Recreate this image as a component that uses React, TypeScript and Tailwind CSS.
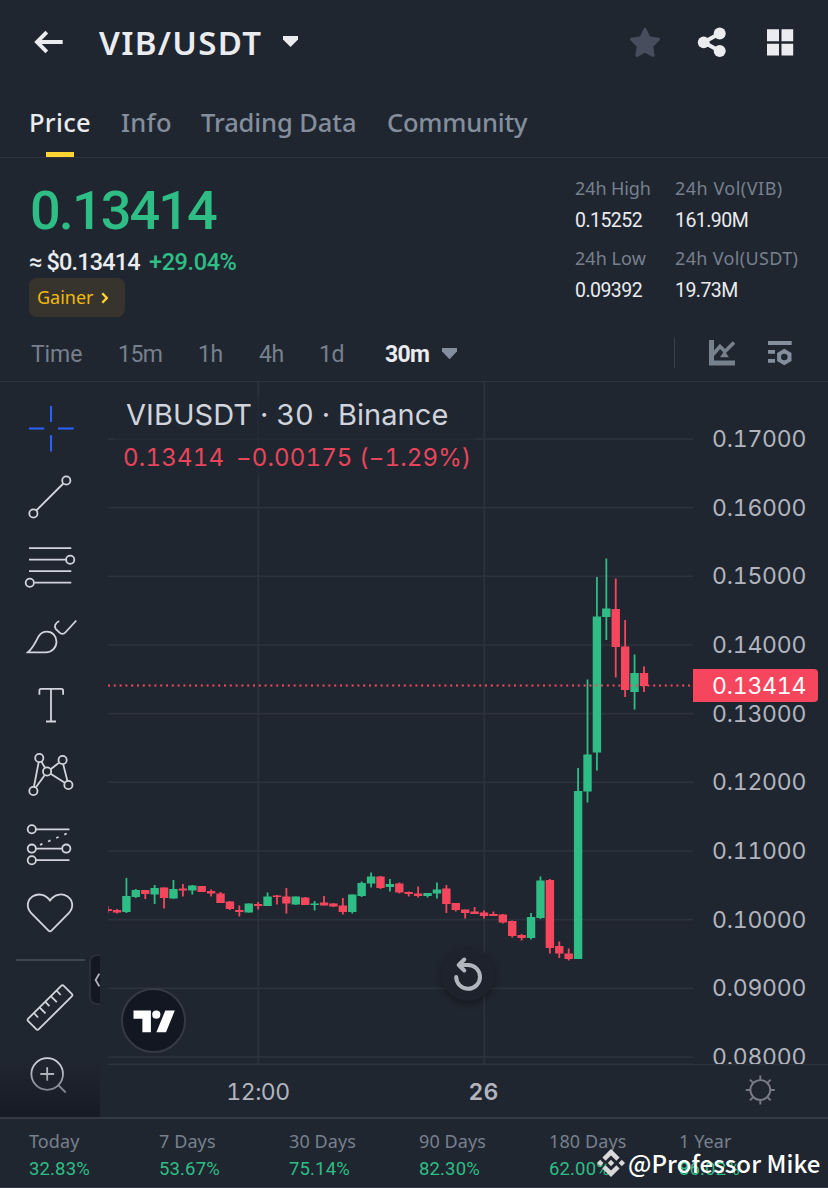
import type { ReactNode } from "react";

type Candle = [up: 0 | 1, high: number, top: number, bottom: number, low: number];

// y positions on the chart canvas, one entry per 30 minute bar
const candles: Candle[] = [
  [0, 906, 909, 911, 913],
  [0, 909, 910, 912.5, 913.5],
  [1, 878, 896, 912, 913],
  [1, 889, 890, 897, 898],
  [0, 890, 890, 894, 899],
  [1, 885, 888, 894.5, 904],
  [0, 887.5, 887.5, 898, 908.5],
  [1, 880, 889, 898.5, 898.5],
  [0, 884, 888.5, 890.5, 896.5],
  [1, 885, 885.5, 890.5, 894.5],
  [0, 886, 886, 892, 892],
  [0, 889.5, 891, 893.5, 896.5],
  [0, 892, 893.5, 903, 903],
  [0, 901, 901.5, 909, 910],
  [0, 905.5, 910, 912, 916.5],
  [1, 903.5, 903.5, 912.5, 912.5],
  [0, 902, 904, 906, 909.5],
  [1, 892.5, 896.5, 906, 906],
  [0, 895, 895.5, 897, 904.5],
  [0, 888, 896.5, 903.5, 913.5],
  [1, 896.5, 896.5, 904.5, 905],
  [0, 897, 897.5, 905, 905],
  [1, 901, 903.5, 905, 910.5],
  [0, 896, 902.5, 905.5, 905.5],
  [0, 903, 903.5, 906.5, 907],
  [0, 898, 905.5, 912, 914.5],
  [1, 894.5, 894.5, 912, 913.5],
  [1, 881.5, 883, 896, 897],
  [1, 872.5, 876.5, 883.5, 887.5],
  [0, 876, 876.5, 888, 889],
  [1, 879, 884, 887, 891.5],
  [0, 882.5, 883.5, 892.5, 893.5],
  [0, 891.5, 892, 894, 896.5],
  [0, 886.5, 893.5, 896, 897.5],
  [1, 893, 893, 896, 897.5],
  [1, 882.5, 889.5, 893.5, 898.5],
  [0, 885, 888.5, 904, 913],
  [0, 903, 903, 910, 911.5],
  [0, 909.5, 909.5, 913, 918.5],
  [0, 907, 911.5, 914, 914],
  [0, 910.5, 912.5, 916, 918.5],
  [0, 911.5, 914, 916, 916],
  [0, 914, 914.5, 922.5, 923.5],
  [0, 920.5, 921, 936, 937.5],
  [0, 934, 935, 938, 940.5],
  [1, 913, 917, 938, 939.5],
  [1, 876.5, 880.5, 918, 919],
  [0, 879, 880, 948, 953.5],
  [0, 941.5, 946, 953.5, 958],
  [0, 948.5, 953.5, 959, 960.5],
  [1, 768, 791, 959, 959],
  [1, 679.5, 754.5, 791.5, 802.5],
  [1, 577, 616.5, 752.5, 770.5],
  [1, 558.5, 608.5, 617, 640],
  [0, 578.5, 609, 647, 677.5],
  [0, 620, 646.5, 690, 697],
  [1, 654.5, 673, 692, 709.5],
  [0, 666.5, 673, 686, 692],
];

const gridRows = [439, 507.7, 576.3, 645, 713.6, 782.3, 851, 919.6, 988.3, 1057];
const prices = [
  "0.17000",
  "0.16000",
  "0.15000",
  "0.14000",
  "0.13000",
  "0.12000",
  "0.11000",
  "0.10000",
  "0.09000",
  "0.08000",
];

const periods = [
  { label: "Today", value: "32.83%" },
  { label: "7 Days", value: "53.67%" },
  { label: "30 Days", value: "75.14%" },
  { label: "90 Days", value: "82.30%" },
  { label: "180 Days", value: "62.00%" },
  { label: "1 Year", value: "86.02%" },
];

function Tool({ y, h = 69, children }: { y: number; h?: number; children: ReactNode }) {
  return (
    <svg
      viewBox={`0 ${y} 100 ${h}`}
      width={100}
      height={h}
      className="block shrink-0"
      fill="none"
      stroke="#d1d4dc"
      strokeWidth={1.8}
    >
      {children}
    </svg>
  );
}

function Header() {
  return (
    <header className="flex h-[86px] items-center">
      <svg viewBox="34 29 30 26" width={30} height={26} className="mb-0.5 ml-[34px]" fill="none" stroke="#eaecef" strokeWidth={3.9}>
        <path d="M62.7 42H37M46.8 32.2L37 42l9.8 9.8" />
      </svg>
      <h1 className="ml-[35px] w-[184px] font-['Noto_Sans'] text-[33px] font-semibold tracking-[1.35px] text-[#eaecef]">
        VIB/USDT
      </h1>
      <svg viewBox="283 35 15 13" width={15} height={13} className="mb-[3px]" fill="#eaecef">
        <path d="M283 36h15v3.4L290.5 47 283 39.4z" />
      </svg>
      <svg viewBox="630 26 30 34" width={30} height={34} className="ml-[332px]" fill="#474d5c" stroke="#474d5c" strokeWidth={3} strokeLinejoin="round">
        <path d="M645 29.3l4 8.5 9.5 1.5-6.8 6.8 1.4 9.3-8.1-4.2-8.1 4.2 1.4-9.3-6.8-6.8 9.5-1.5z" />
      </svg>
      <svg viewBox="697 26 30 34" width={30} height={34} className="ml-[37px]" fill="#eaecef">
        <path d="M719.7 33.5L703.7 42.3l16 8.7" fill="none" stroke="#eaecef" strokeWidth={4} />
        <circle cx={719.7} cy={33.6} r={6} />
        <circle cx={703.7} cy={42.3} r={5.9} />
        <circle cx={719.7} cy={51.1} r={6} />
      </svg>
      <svg viewBox="766 26 28 34" width={28} height={34} className="ml-[39px]" fill="#eaecef">
        <path d="M767 29.2h12v12h-12zM781.5 29.2h11.7v12h-11.7zM767 43.8h12v11.7h-12zM781.5 43.8h11.7v11.7h-11.7z" />
      </svg>
    </header>
  );
}

function Tabs() {
  return (
    <nav className="flex h-[72px] border-b border-[#2d333d] pt-5 pl-[29px] font-['Noto_Sans'] text-[25.5px] leading-8 font-medium text-[#848e9c]">
      <div className="relative w-[92px] tracking-[0.3px] text-[#eaecef]">
        Price
        <span className="absolute top-[46px] left-[17px] h-[5px] w-[28px] bg-[#fcd535]" />
      </div>
      <div className="w-[80px] tracking-[0.3px]">Info</div>
      <div className="w-[186px] tracking-[-0.1px]">Trading Data</div>
      <div className="tracking-[-0.2px]">Community</div>
    </nav>
  );
}

function Stat({ label, value, labelClass }: { label: string; value: string; labelClass: string }) {
  return (
    <div className="whitespace-nowrap">
      <div className={`font-['Noto_Sans'] text-[18px] leading-[29px] text-[#77808d] ${labelClass}`}>{label}</div>
      <div className="pt-0.5 font-['Roboto'] text-[19.5px] leading-[32px] tracking-[-0.55px] text-[#eaecef]">{value}</div>
    </div>
  );
}

function Ticker() {
  return (
    <section className="flex h-[167px]">
      <div className="w-[546px] pt-[25px] pl-[29px]">
        <div className="pl-px font-['Roboto'] text-[54px] leading-[56px] font-medium tracking-[-1.9px] text-[#2ebd85]">0.13414</div>
        <div className="flex pt-[7px] font-['Roboto'] text-[23.5px] leading-8 font-medium">
          <span className="w-[120px] tracking-[-0.85px] text-[#eaecef]">≈ $0.13414</span>
          <span className="tracking-[-0.4px] text-[#2ebd85]">+29.04%</span>
        </div>
        <div className="flex h-[39px] w-24 items-center rounded-lg bg-[#37342d] pl-2 font-['Noto_Sans'] text-[18px] text-[#f0b90b]">
          <span className="w-16">Gainer</span>
          <svg viewBox="0 0 8 12" width={8} height={12} fill="none" stroke="#fcd535" strokeWidth={2.4}>
            <path d="M1.3 1.2L5.8 6l-4.5 4.8" />
          </svg>
        </div>
      </div>
      <div className="grid grid-cols-[100px_auto] content-start gap-y-[7px] pt-4 pl-[29px]">
        <Stat label="24h High" value="0.15252" labelClass="tracking-[-0.1px]" />
        <Stat label="24h Vol(VIB)" value="161.90M" labelClass="tracking-[0.5px]" />
        <Stat label="24h Low" value="0.09392" labelClass="tracking-[0.05px]" />
        <Stat label="24h Vol(USDT)" value="19.73M" labelClass="tracking-[0.35px]" />
      </div>
    </section>
  );
}

function Intervals() {
  return (
    <div className="flex h-[57px] items-center border-b border-[#2d333d] pl-[31px] font-['Roboto'] text-[23px] text-[#77808d] [&>span]:pt-[5px]">
      <span className="w-[87px] tracking-[-0.1px]">Time</span>
      <span className="w-20 tracking-[-0.5px]">15m</span>
      <span className="w-[61px] tracking-[-0.5px]">1h</span>
      <span className="w-[60px] tracking-[-0.5px]">4h</span>
      <span className="w-[66px] tracking-[-0.5px]">1d</span>
      <span className="w-[57px] font-bold tracking-[-0.7px] text-[#eaecef]">30m</span>
      <svg viewBox="442 346 15 13" width={15} height={13} fill="#848e9c">
        <path d="M442 347h15v3.2l-7.5 8-7.5-8z" />
      </svg>
      <div className="ml-[217px] h-[30px] w-px bg-[#3a404b]" />
      <svg viewBox="709 339 28 28" width={28} height={28} className="ml-[34px]" fill="#77808d">
        <path d="M709 340h5v20.5h21v5h-26z" />
        <path d="M713 354.5l7-8 5 5 9-9" fill="none" stroke="#77808d" strokeWidth={3.6} />
        <path d="M724.5 350.5l4.3 6.8H720z" />
      </svg>
      <svg viewBox="768 339 25 28" width={25} height={28} className="ml-[31px]" fill="#848e9c">
        <path d="M768 341h23.7v4H768zM768 350h7v3.7h-7zM768 359h7v3.7h-7z" />
        <path fillRule="evenodd" d="M784.3 348.8l7.2 4.1v8.2l-7.2 4.1-7.2-4.1v-8.2zM784.3 353.7a3.3 3.3 0 1 0 0 6.6 3.3 3.3 0 0 0 0-6.6z" />
      </svg>
    </div>
  );
}

function Toolbar() {
  return (
    <aside className="relative flex w-[100px] shrink-0 flex-col pt-3">
      <Tool y={394}>
        <path stroke="#2962ff" strokeWidth={2} d="M51 406v16M51 435.3v16.2M29 428.6h15.3M58 428.6h15.7" />
      </Tool>
      <Tool y={463}>
        <path d="M36.3 510.5l27-27" />
        <circle cx={66.3} cy={480.5} r={4.1} />
        <circle cx={33.4} cy={513.5} r={4.1} />
      </Tool>
      <Tool y={532}>
        <path d="M29 548.2h42.3M29 559.7h37M29 571.2h42.3M34.3 582.7h37" />
        <circle cx={70.2} cy={559.7} r={4.1} />
        <circle cx={29.8} cy={582.7} r={4.1} />
      </Tool>
      <Tool y={601}>
        <path d="M28 652.3C33 648 36.5 640.5 38.5 636.5C41 632.6 44 631.7 47 631.7C52.5 631.7 56.5 636.3 56.5 641.7C56.5 647.5 52 652.3 46 652.3Z" />
        <path d="M59.2 621C55 623.3 54 626.5 55.7 628.8L59.5 632.7C61.3 634.5 63.8 634.2 65.3 632.5L76.3 620.5" />
      </Tool>
      <Tool y={670}>
        <path d="M39.4 694.8v-4.3q0-1.7 1.7-1.7h20.3q1.7 0 1.7 1.7v4.3M51 689v32.5M46 721.5h10" />
      </Tool>
      <Tool y={739}>
        <path d="M33.9 787l4.8-25M41.4 761.5l3.5 6.3M44.8 775l-9 12.6M50.6 769.2l8.4-6.4M63.2 764.2l4.2 16.7M50.6 773.8l14.2 9" />
        <circle cx={39.3} cy={758} r={4.1} />
        <circle cx={62.6} cy={760} r={4.1} />
        <circle cx={47.1} cy={771.5} r={4.1} />
        <circle cx={33.4} cy={791} r={4.1} />
        <circle cx={68.4} cy={785} r={4.1} />
      </Tool>
      <Tool y={808}>
        <path d="M36 829.3h33.5M36 848.6h26.2M36 860.2h33.5" />
        <path strokeDasharray="2.6 6.2" d="M40 844.9l27.5-11.7" />
        <circle cx={31.8} cy={829.3} r={4.1} />
        <circle cx={31.8} cy={848.6} r={4.1} />
        <circle cx={66.3} cy={848.6} r={4.1} />
        <circle cx={31.8} cy={860.2} r={4.1} />
      </Tool>
      <Tool y={877}>
        <path d="M50 900.5C46 894.5 38.5 892.8 32.8 896.3C27 900 26 907.5 31 912.8L48.5 930.6Q50 932 51.5 930.6L69 912.8C74 907.5 73 900 67.2 896.3C61.5 892.8 54 894.5 50 900.5Z" />
      </Tool>
      <div className="mt-[13px] ml-4 h-0.5 w-[69px] shrink-0 bg-[#3f4453]" />
      <Tool y={961} h={77}>
        <path d="M61.2 985.8q1.3-1.3 2.6 0l8 8q1.3 1.3 0 2.6l-33 32.8q-1.3 1.3-2.6 0l-8-8q-1.3-1.3 0-2.6z" />
        <path d="M34 1013l4 4.5M39.5 1007.3l6 6M45.2 1001.6l4.2 4.5M50.8 996.2l6 6M56.5 990.5l4.2 4.5" />
      </Tool>
      <Tool y={1038} h={79}>
        <circle cx={47.2} cy={1074} r={15.8} />
        <path d="M40.3 1074h13.8M47.2 1067.2v13.6M58.3 1085.2l7.4 7.3" />
      </Tool>
      <div className="absolute bottom-0 left-0 h-14 w-full bg-gradient-to-b from-transparent to-[#131722]/80" />
      <div className="absolute top-[572px] right-0 flex h-[51px] w-[11px] items-center justify-end rounded-l-lg border-2 border-r-0 border-[#2a2e39] bg-[#131722]">
        <svg viewBox="0 0 6 14" width={6} height={14} fill="none" stroke="#b2b5be" strokeWidth={1.8}>
          <path d="M5.3 .7L1.6 7l3.7 6.3" />
        </svg>
      </div>
    </aside>
  );
}

function Candles() {
  return (
    <svg viewBox="108 382 585 683" width={585} height={683} className="block">
      <g fill="#2d333e">
        {gridRows.map((y) => (
          <rect key={y} x={108} y={y - 0.8} width={585} height={1.6} />
        ))}
        <rect x={257.5} y={382} width={1.6} height={683} />
        <rect x={483.5} y={382} width={1.6} height={683} />
        <rect x={108} y={1063.5} width={585} height={1.5} />
      </g>
      {candles.map(([up, high, top, bottom, low], i) => {
        const x = 107.6 + i * 9.41;
        return (
          <g key={i} fill={up ? "#2ebd85" : "#f6465d"}>
            <rect x={x - 0.9} y={high} width={1.8} height={low - high} />
            <rect x={x - 4.2} y={top} width={8.4} height={bottom - top} />
          </g>
        );
      })}
      <path d="M108 685.4h585" stroke="#f6465d" strokeWidth={2} strokeDasharray="2 3.8" />
    </svg>
  );
}

function Chart() {
  return (
    <div className="ml-2 flex grow flex-col">
      <div className="flex h-[683px]">
        <div className="relative w-[585px] overflow-hidden">
          <Candles />
          <div className="absolute top-[15px] left-[7px] bg-[#202630]/60 pr-1 pl-2 font-['Inter'] whitespace-nowrap tabular-nums">
            <div className="pl-[3px] text-[29px] leading-9 tracking-[0.05px] text-[#d1d4dc]">VIBUSDT · 30 · Binance</div>
            <div className="flex pt-[7px] text-[24px] leading-9 text-[#e8455b]">
              <span className="w-[113px] tracking-[0.2px]">0.13414</span>
              <span className="tracking-[0.15px]">−0.00175 (−1.29%)</span>
            </div>
          </div>
          <div className="absolute top-[606px] left-[12.5px] size-[65px] rounded-full border-2 border-[#363a45] bg-[#131722]">
            <svg viewBox="122.5 990.5 61 61" width={61} height={61} fill="#fff">
              <path d="M133 1011h17.4v21.7h-8.5V1019.2H133zM164.8 1011h9.5l-8.8 21.7h-9.6z" />
              <circle cx={155.8} cy={1015.1} r={4.1} />
            </svg>
          </div>
          <div className="absolute top-[565px] left-[333px] size-[54px] rounded-full bg-[#1e222d] shadow-[0_3px_6px_rgba(0,0,0,0.35)]">
            <svg viewBox="441 947 54 54" width={54} height={54} fill="none" stroke="#b2b5be" strokeWidth={4} strokeLinecap="round" strokeLinejoin="round">
              <path d="M464.3 959.5l-5.6 5.5 5.6 5.5M459.5 965H468A11.9 11.9 0 1 1 456.2 977" />
            </svg>
          </div>
        </div>
        <div className="relative w-[135px] overflow-hidden border-b border-[#2f3540] pt-[23px] pl-[19px] font-['Inter'] text-[23px] leading-[68.66px] tracking-[-0.2px] text-[#b2b5be] tabular-nums">
          {prices.map((price) => (
            <div key={price} className="h-[68.66px]">
              {price}
            </div>
          ))}
          <div className="absolute top-[287px] left-0 h-[33px] w-[125px] rounded-r bg-[#f6465d] pl-[19px] leading-[34px] text-white">
            0.13414
          </div>
        </div>
      </div>
      <div className="flex h-[52px] items-center font-['Inter'] text-[23px] text-[#b2b5be] tabular-nums">
        <div className="flex w-[585px] pt-[3px] pl-[37px] text-center">
          <span className="w-[226px] tracking-[-0.5px]">12:00</span>
          <span className="w-[225px] font-semibold">26</span>
        </div>
        <svg viewBox="743 1073 34 34" width={34} height={34} className="mb-0.5 ml-[50px]" fill="none" stroke="#787b86" strokeWidth={1.9}>
          <circle cx={760.3} cy={1090} r={9.9} />
          <path d="M760.3 1080v-4.5M760.3 1100v4.5M750.3 1090h-4.5M770.3 1090h4.5M753.2 1082.9l-3.3-3.3M767.4 1082.9l3.3-3.3M753.2 1097.1l-3.3 3.3M767.4 1097.1l3.3 3.3" />
        </svg>
      </div>
    </div>
  );
}

function Watermark() {
  return (
    <div className="absolute top-[26px] right-[4px] flex items-center whitespace-nowrap">
      <svg viewBox="0 0 28 28" width={28} height={28} fill="#d9d9d9">
        <path d="M14 0l8.6 8.6-3.2 3.2L14 6.4l-5.4 5.4-3.2-3.2zM14 28l8.6-8.6-3.2-3.2-5.4 5.4-5.4-5.4-3.2 3.2zM14 10.8l3.2 3.2-3.2 3.2-3.2-3.2zM3.2 10.8L6.4 14l-3.2 3.2L0 14zM24.8 10.8L28 14l-3.2 3.2-3.2-3.2z" />
      </svg>
      <span className="ml-[3px] w-[196px] font-['Noto_Sans_CJK_SC','Noto_Sans',sans-serif] text-[24px] leading-9 font-medium tracking-[0.07px] text-white">
        @Professor Mike
      </span>
    </div>
  );
}

function Footer() {
  return (
    <footer className="relative flex h-[71px] border-t-2 border-b border-t-[#343a45] border-b-[#343a45] pt-[9px] pl-[29px]">
      {periods.map(({ label, value }) => (
        <div key={label} className="w-[130px] whitespace-nowrap">
          <div className="font-['Noto_Sans'] text-[18px] leading-[26px] tracking-[0.1px] text-[#77808d]">{label}</div>
          <div className="pt-[2px] font-['Roboto'] text-[18.5px] leading-[26px] tracking-[0.15px] text-[#2ebd85]">{value}</div>
        </div>
      ))}
      <Watermark />
    </footer>
  );
}

export default function App() {
  return (
    <main className="h-[1188px] w-[828px] overflow-hidden bg-[#202630]">
      <Header />
      <Tabs />
      <Ticker />
      <Intervals />
      <div className="flex h-[735px]">
        <Toolbar />
        <Chart />
      </div>
      <Footer />
    </main>
  );
}
